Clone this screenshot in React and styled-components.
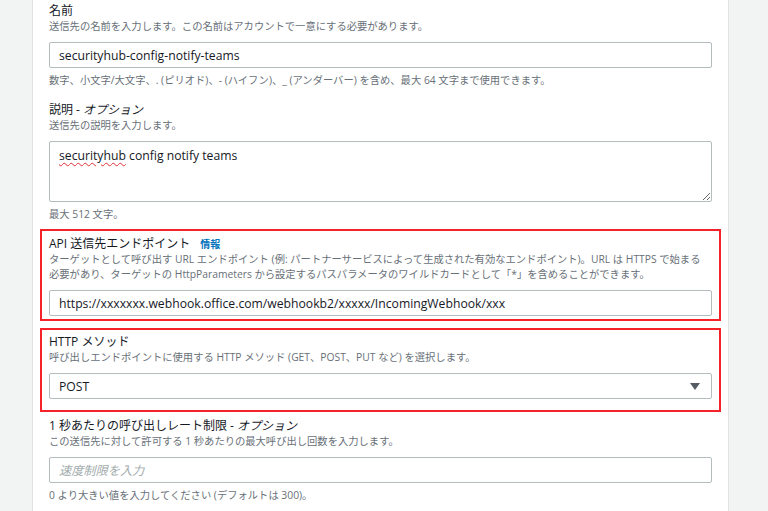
import React from 'react';
import styled, { createGlobalStyle } from 'styled-components';

const GlobalStyle = createGlobalStyle`
    body {
        margin: 0;
        background: #f2f3f3;
        font-family: 'Open Sans', 'Noto Sans CJK JP', sans-serif;
        color: #16191f;
    }
`;

const Panel = styled.main`
    margin-left: 32px;
    width: 697px;
    min-height: 100vh;
    box-sizing: border-box;
    padding: 0 16px;
    background: #fff;
    border-left: 1px solid #dfe3e3;
    border-right: 1px solid #dfe3e3;
`;

const Field = styled.section`
    margin: ${props => props.mt || 0}px -9px 0;
    padding: ${props => props.pt || 0}px 7px ${props => props.pb || 0}px;
    border: 2px solid ${props => props.highlighted ? '#f5222a' : 'transparent'};
`;

const Label = styled.div`
    font-size: 12px;
    line-height: 16px;
    color: #16191f;
    white-space: nowrap;
`;

const Optional = styled.em`
    font-style: italic;
`;

const Info = styled.a`
    margin-left: 10px;
    font-size: 10px;
    font-weight: 700;
    color: #0073bb;
    text-decoration: none;
`;

const Desc = styled.div`
    font-size: 10.3px;
    line-height: 15px;
    color: #687078;
    white-space: nowrap;
`;

const Hint = styled(Desc)`
    margin-top: 5px;
`;

const TextInput = styled.input`
    display: block;
    width: 100%;
    height: 26px;
    margin-top: 8px;
    box-sizing: border-box;
    padding: 0 9px;
    border: 1px solid #b4bdbe;
    border-radius: 2px;
    font-family: inherit;
    font-size: 12.2px;
    color: #16191f;
    outline: none;

    &::placeholder {
        color: #a3acad;
        font-style: italic;
    }
`;

const TextBox = styled.div`
    height: 61px;
    margin-top: 8px;
    box-sizing: border-box;
    padding: 5px 9px;
    border: 1px solid #b4bdbe;
    border-radius: 2px;
    font-size: 12.2px;
    line-height: 17px;
    overflow: auto;
    resize: vertical;
`;

const Misspelled = styled.span`
    text-decoration: underline wavy #e0313a;
    text-decoration-thickness: 1px;
    text-underline-offset: 2px;
`;

const SelectWrap = styled.div`
    position: relative;
    margin-top: 8px;
`;

const Select = styled.select`
    display: block;
    width: 100%;
    height: 26px;
    box-sizing: border-box;
    padding: 0 9px;
    border: 1px solid #b4bdbe;
    border-radius: 2px;
    background: #fff;
    font-family: inherit;
    font-size: 12.2px;
    color: #16191f;
    appearance: none;
    outline: none;
`;

const Caret = styled.svg`
    position: absolute;
    right: 12px;
    top: 10px;
    pointer-events: none;
`;

export default function App() {
    return (
        <>
            <GlobalStyle />
            <Panel>
                <Field pt={1}>
                    <Label>名前</Label>
                    <Desc>送信先の名前を入力します。この名前はアカウントで一意にする必要があります。</Desc>
                    <TextInput defaultValue="securityhub-config-notify-teams" />
                    <Hint>数字、小文字/大文字、. (ピリオド)、- (ハイフン)、_ (アンダーバー) を含め、最大 64 文字まで使用できます。</Hint>
                </Field>

                <Field pt={10}>
                    <Label>説明 - <Optional>オプション</Optional></Label>
                    <Desc>送信先の説明を入力します。</Desc>
                    <TextBox>
                        <Misspelled>securityhub</Misspelled> config notify teams
                    </TextBox>
                    <Hint>最大 512 文字。</Hint>
                </Field>

                <Field highlighted mt={5} pt={5} pb={3}>
                    <Label>API 送信先エンドポイント<Info href="#">情報</Info></Label>
                    <Desc>ターゲットとして呼び出す URL エンドポイント (例: パートナーサービスによって生成された有効なエンドポイント)。URL は HTTPS で始まる</Desc>
                    <Desc>必要があり、ターゲットの HttpParameters から設定するパスパラメータのワイルドカードとして「*」を含めることができます。</Desc>
                    <TextInput defaultValue="https://xxxxxxx.webhook.office.com/webhookb2/xxxxx/IncomingWebhook/xxx" />
                </Field>

                <Field highlighted mt={7} pt={4} pb={11}>
                    <Label>HTTP メソッド</Label>
                    <Desc>呼び出しエンドポイントに使用する HTTP メソッド (GET、POST、PUT など) を選択します。</Desc>
                    <SelectWrap>
                        <Select defaultValue="POST">
                            <option>GET</option>
                            <option>POST</option>
                            <option>PUT</option>
                        </Select>
                        <Caret width="10" height="7" viewBox="0 0 10 7">
                            <path d="M0 0h10L5 7z" fill="#545b64" />
                        </Caret>
                    </SelectWrap>
                </Field>

                <Field pt={4}>
                    <Label>1 秒あたりの呼び出しレート制限 - <Optional>オプション</Optional></Label>
                    <Desc>この送信先に対して許可する 1 秒あたりの最大呼び出し回数を入力します。</Desc>
                    <TextInput placeholder="速度制限を入力" />
                    <Hint>0 より大きい値を入力してください (デフォルトは 300)。</Hint>
                </Field>
            </Panel>
        </>
    );
}
